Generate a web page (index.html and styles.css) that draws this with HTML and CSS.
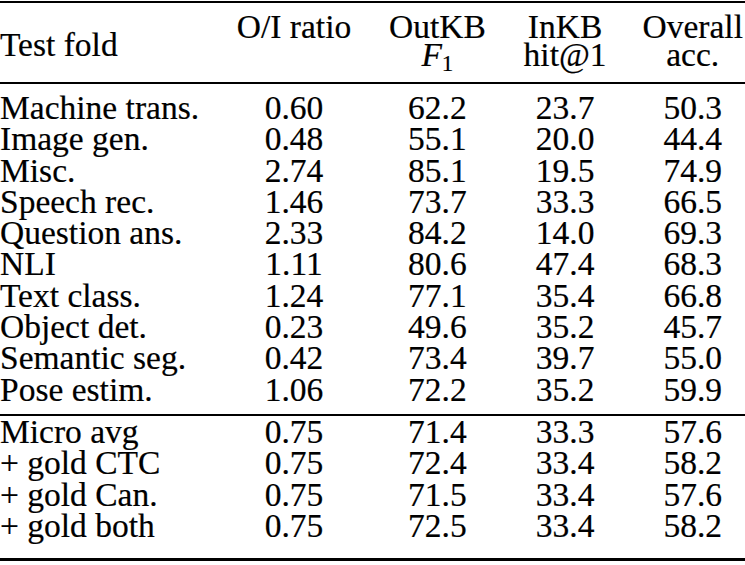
FILE: index.html
```html
<!DOCTYPE html>
<html>
<head>
<meta charset="utf-8">
<link rel="stylesheet" href="styles.css">
</head>
<body>
<table class="results">
  <colgroup>
    <col class="c-fold">
    <col class="c-ratio">
    <col class="c-out">
    <col class="c-in">
    <col class="c-all">
  </colgroup>
  <thead>
    <tr>
      <th class="name head-fold">Test fold</th>
      <th class="num">O/I ratio</th>
      <th class="num">OutKB<br><span class="math">F</span><sub class="sub">1</sub></th>
      <th class="num">InKB<br>hit@1</th>
      <th class="num last">Overall<br>acc.</th>
    </tr>
  </thead>
  <tbody class="folds">
    <tr><td class="name">Machine trans.</td><td class="num">0.60</td><td class="num">62.2</td><td class="num">23.7</td><td class="num last">50.3</td></tr>
    <tr><td class="name">Image gen.</td><td class="num">0.48</td><td class="num">55.1</td><td class="num">20.0</td><td class="num last">44.4</td></tr>
    <tr><td class="name">Misc.</td><td class="num">2.74</td><td class="num">85.1</td><td class="num">19.5</td><td class="num last">74.9</td></tr>
    <tr><td class="name">Speech rec.</td><td class="num">1.46</td><td class="num">73.7</td><td class="num">33.3</td><td class="num last">66.5</td></tr>
    <tr><td class="name">Question ans.</td><td class="num">2.33</td><td class="num">84.2</td><td class="num">14.0</td><td class="num last">69.3</td></tr>
    <tr><td class="name">NLI</td><td class="num">1.11</td><td class="num">80.6</td><td class="num">47.4</td><td class="num last">68.3</td></tr>
    <tr><td class="name">Text class.</td><td class="num">1.24</td><td class="num">77.1</td><td class="num">35.4</td><td class="num last">66.8</td></tr>
    <tr><td class="name">Object det.</td><td class="num">0.23</td><td class="num">49.6</td><td class="num">35.2</td><td class="num last">45.7</td></tr>
    <tr><td class="name">Semantic seg.</td><td class="num">0.42</td><td class="num">73.4</td><td class="num">39.7</td><td class="num last">55.0</td></tr>
    <tr><td class="name">Pose estim.</td><td class="num">1.06</td><td class="num">72.2</td><td class="num">35.2</td><td class="num last">59.9</td></tr>
  </tbody>
  <tbody class="summary">
    <tr><td class="name">Micro avg</td><td class="num">0.75</td><td class="num">71.4</td><td class="num">33.3</td><td class="num last">57.6</td></tr>
    <tr><td class="name">+ gold CTC</td><td class="num">0.75</td><td class="num">72.4</td><td class="num">33.4</td><td class="num last">58.2</td></tr>
    <tr><td class="name">+ gold Can.</td><td class="num">0.75</td><td class="num">71.5</td><td class="num">33.4</td><td class="num last">57.6</td></tr>
    <tr><td class="name">+ gold both</td><td class="num">0.75</td><td class="num">72.5</td><td class="num">33.4</td><td class="num last">58.2</td></tr>
  </tbody>
</table>
</body>
</html>
```
FILE: styles.css
```css
html, body {
  margin: 0;
  padding: 0;
  background: #ffffff;
}

.results {
  margin-top: 1px;
  width: 745px;
  table-layout: fixed;
  border-collapse: separate;
  border-spacing: 0;
  font-family: "Liberation Serif", "Times New Roman", serif;
  font-size: 33.5px;
  color: #000000;
  -webkit-text-stroke: 0.2px #000000;
}

.c-fold { width: 217.9px; }
.c-ratio { width: 152.2px; }
.c-out { width: 134.6px; }
.c-in { width: 120.8px; }
.c-all { width: 119.5px; }

.results th,
.results td {
  padding: 0;
  font-weight: normal;
  white-space: nowrap;
}

.results .name {
  text-align: left;
}

.results .num {
  text-align: center;
}

.results .last {
  padding-left: 15px;
}

/* header */
.results thead th {
  vertical-align: top;
  line-height: 27.5px;
  padding-top: 10px;
  padding-bottom: 14px;
  border-top: 2px solid #000;
  border-bottom: 2px solid #000;
}

.results thead th.head-fold {
  padding-top: 28px;
  padding-bottom: 0;
}

.math {
  font-style: italic;
}

.sub {
  font-size: 23px;
  line-height: 0;
  vertical-align: -5px;
}

/* body rows */
.results tbody td {
  line-height: 31.3px;
}

.folds tr:first-child td {
  padding-top: 8px;
}

.folds tr:last-child td {
  padding-bottom: 9px;
  border-bottom: 2px solid #000;
}

.summary td {
  line-height: 31.8px;
}

.summary tr:first-child td {
  padding-top: 0;
}

.summary tr:last-child td {
  padding-bottom: 17px;
  border-bottom: 3px solid #000;
}
```
